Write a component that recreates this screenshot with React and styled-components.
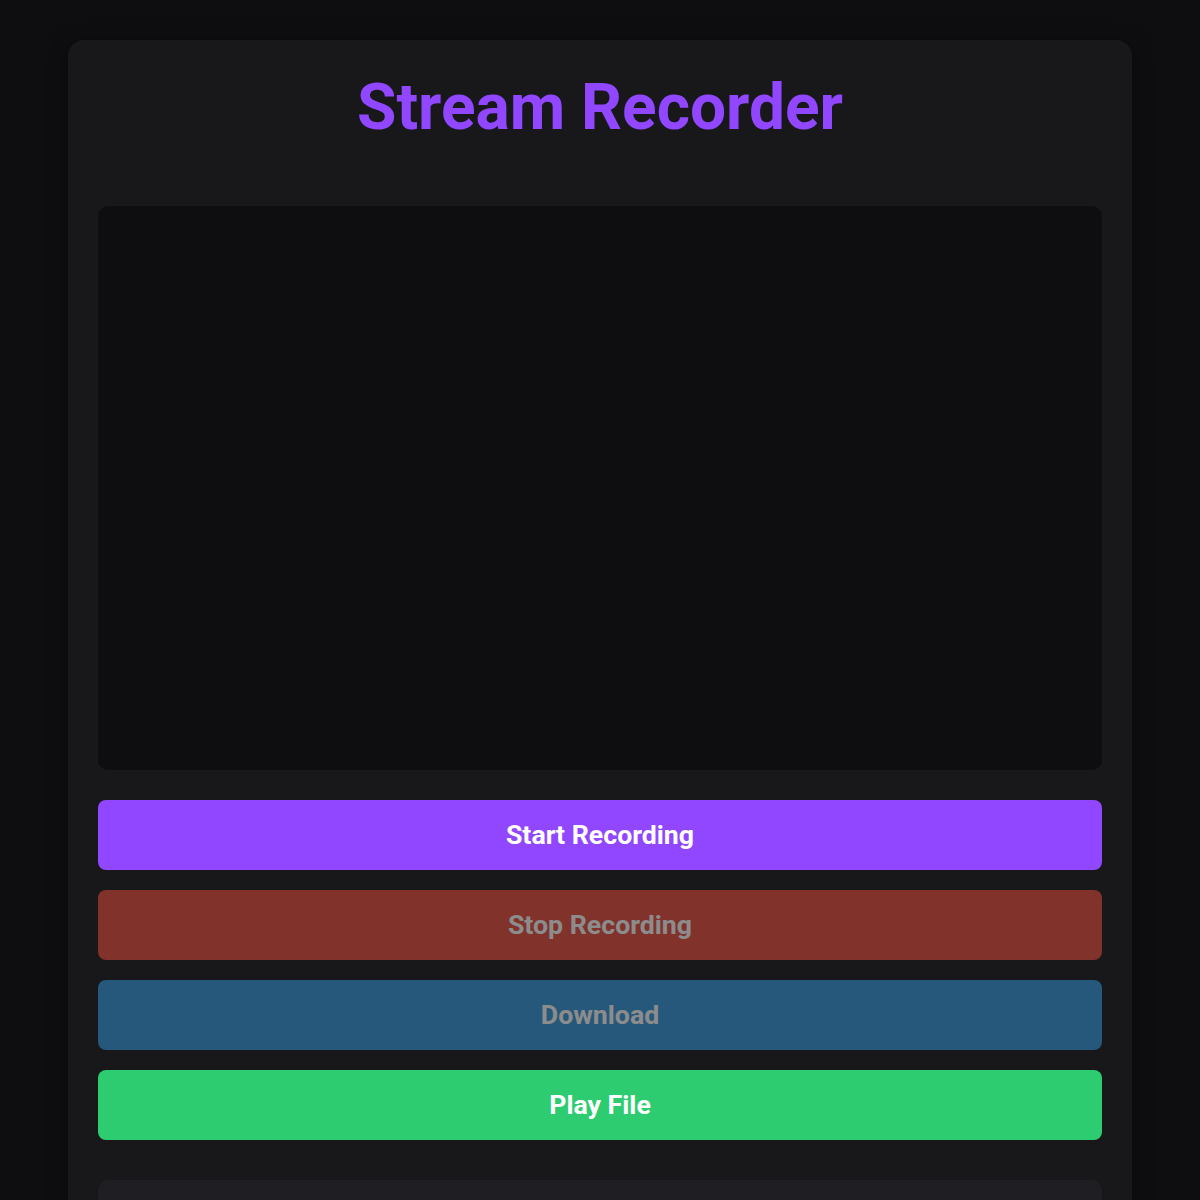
import React, { useState } from 'react'
import styled, { createGlobalStyle } from 'styled-components'

const GlobalStyle = createGlobalStyle`
  body {
    margin: 0;
    background: #0e0e10;
    font-family: Roboto, "Liberation Sans", sans-serif;
    color: #efeff1;
  }
`

const Page = styled.div`
  padding: 40px 68px;
`

const Card = styled.div`
  background: #18181b;
  border-radius: 16px;
  padding: 30px;
  box-shadow: 0 4px 20px rgba(0, 0, 0, 0.4);
  display: flex;
  flex-direction: column;
`

const Title = styled.h1`
  margin: 0 0 60px;
  text-align: center;
  color: #9147ff;
  font-size: 64px;
  font-weight: 700;
  line-height: 76px;
`

const Video = styled.video`
  display: block;
  width: 100%;
  height: 564px;
  background: #0e0e10;
  border-radius: 10px;
  margin-bottom: 30px;
`

const Controls = styled.div`
  display: flex;
  flex-direction: column;
  gap: 20px;
  margin-bottom: 40px;
`

const Button = styled.button`
  height: 70px;
  border: none;
  border-radius: 8px;
  background: ${p => p.$color};
  color: #fff;
  font-family: Roboto, "Liberation Sans", sans-serif;
  font-size: 26.7px;
  font-weight: 700;
  cursor: pointer;
  &:disabled {
    opacity: 0.5;
    cursor: not-allowed;
  }
`

const Panel = styled.div`
  background: #1f1f23;
  border-radius: 10px;
  height: 160px;
`

function App() {
  const [recording, setRecording] = useState(false)
  const [blob, setBlob] = useState(null)

  return (
    <>
      <GlobalStyle />
      <Page>
        <Card>
          <Title>Stream Recorder</Title>
          <Video muted />
          <Controls>
            <Button $color="#9147ff" disabled={recording} onClick={() => setRecording(true)}>
              Start Recording
            </Button>
            <Button $color="#e74c3c" disabled={!recording} onClick={() => { setRecording(false); setBlob({}) }}>
              Stop Recording
            </Button>
            <Button $color="#3498db" disabled={!blob}>
              Download
            </Button>
            <Button $color="#2ecc71">Play File</Button>
          </Controls>
          <Panel />
        </Card>
      </Page>
    </>
  )
}

export default App
